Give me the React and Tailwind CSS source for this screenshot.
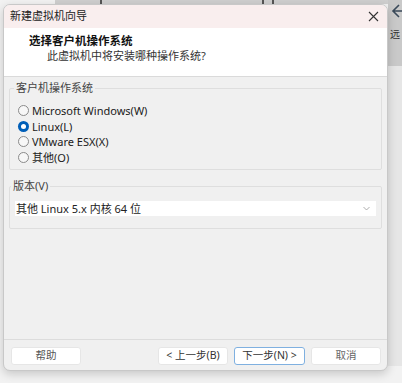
import React from "react";

const font = { fontFamily: '"Noto Sans", "Noto Sans CJK SC", sans-serif' };

function Radio({ checked, label }) {
  return (
    <div className="flex items-center h-[15.5px]">
      {checked ? (
        <div className="w-[11px] h-[11px] rounded-full bg-[#005fb8] flex items-center justify-center">
          <div className="w-[5px] h-[5px] rounded-full bg-white" />
        </div>
      ) : (
        <div className="w-[11px] h-[11px] rounded-full border border-[#8a8a8a] bg-[#f7f7f7]" />
      )}
      <span className="ml-[3px] text-[11px] text-[#1a1a1a] leading-none">{label}</span>
    </div>
  );
}

function Btn({ children, primary, className = "" }) {
  return (
    <div
      className={
        "h-[18px] flex items-center justify-center rounded-[3px] bg-white text-[10.5px] " +
        (primary ? "border border-[#7fb0e0] " : "border border-[#e6e6e6] ") +
        className
      }
    >
      {children}
    </div>
  );
}

export default function App() {
  return (
    <div className="relative w-[402px] h-[383px] bg-[#f2f2f2] overflow-hidden" style={font}>
      {/* background window fragments */}
      <div className="absolute left-[55px] top-0 w-[340px] h-[4px] bg-[#cfcfcf]" />
      <div className="absolute left-[100px] top-0 w-[2px] h-[4px] bg-[#555]" />
      <div className="absolute left-[262px] top-0 w-[2px] h-[4px] bg-[#555]" />
      <div className="absolute left-[272px] top-0 w-[2px] h-[4px] bg-[#555]" />
      <div className="absolute left-[388px] top-0 w-[14px] h-[66px] bg-[#c9c9c9]" />
      <div className="absolute left-[388px] top-[66px] w-[14px] h-[300px] bg-[#e6e6e6]" />
      <svg className="absolute left-[391px] top-[4px]" width="11" height="14" viewBox="0 0 11 14">
        <path d="M8 1 L2 7 L8 13 M2 7 L11 7" stroke="#3a4a5a" strokeWidth="1.6" fill="none" />
      </svg>
      <div className="absolute left-[390px] top-[29px] text-[10px] leading-none text-[#333]">远</div>

      {/* dialog */}
      <div className="absolute left-[3px] top-[4px] w-[385px] h-[367px] rounded-[7px] border border-[#c8c8c8] bg-[#f0f0f0] overflow-hidden shadow-[0_3px_10px_rgba(0,0,0,0.18)] flex flex-col">
        {/* title bar */}
        <div className="h-[23px] bg-[#f9eeee] flex items-center justify-between pl-[6px] pr-[8px] shrink-0">
          <span className="text-[11px] text-[#222]">新建虚拟机向导</span>
          <svg width="11" height="11" viewBox="0 0 11 11">
            <path d="M1 1 L10 10 M10 1 L1 10" stroke="#333" strokeWidth="1.1" />
          </svg>
        </div>
        {/* header */}
        <div className="h-[49px] bg-white border-b border-[#dadada] shrink-0 pl-[25px] pt-[5px]">
          <div className="text-[11.5px] font-bold text-[#111] leading-[15px]">选择客户机操作系统</div>
          <div className="text-[11px] text-[#333] leading-[15px] pl-[18px]">此虚拟机中将安装哪种操作系统?</div>
        </div>

        {/* body */}
        <div className="flex-1 px-[5px] pt-[4px] flex flex-col">
          <fieldset className="border border-[#dedede] rounded-[2px] mx-0 h-[89px] pl-[8px] pt-[2px] flex flex-col">
            <legend className="text-[11px] text-[#444] px-[2px] ml-[-4px] leading-[14px]">客户机操作系统</legend>
            <div className="mt-[6px] flex flex-col">
              <Radio label="Microsoft Windows(W)" />
              <Radio checked label="Linux(L)" />
              <Radio label="VMware ESX(X)" />
              <Radio label="其他(O)" />
            </div>
          </fieldset>

          <fieldset className="mt-[9px] border border-[#dedede] rounded-[2px] h-[50px] px-[5px] pt-[1px]">
            <legend className="text-[11px] text-[#444] px-[2px] ml-[-4px] leading-[14px]">版本(V)</legend>
            <div className="mt-[7px] h-[15px] bg-white flex items-center justify-between pl-[1px] pr-[6px]">
              <span className="text-[11px] text-[#222] leading-none">其他 Linux 5.x 内核 64 位</span>
              <svg width="7" height="5" viewBox="0 0 7 5">
                <path d="M0.5 1 L3.5 4 L6.5 1" stroke="#999" strokeWidth="0.8" fill="none" />
              </svg>
            </div>
          </fieldset>

          <div className="flex-1" />
          <div className="border-t border-[#dcdcdc] mx-[-5px] mb-[7px]" />
          <div className="flex items-center mb-[5px] pl-[2px] pr-[1px]">
            <Btn className="w-[70px] text-[#555]">帮助</Btn>
            <div className="flex-1" />
            <Btn className="w-[70px] text-[#333]">&lt; 上一步(B)</Btn>
            <Btn primary className="w-[71px] ml-[6px] text-[#333]">下一步(N) &gt;</Btn>
            <Btn className="w-[70px] ml-[6px] text-[#666]">取消</Btn>
          </div>
        </div>
      </div>
    </div>
  );
}
